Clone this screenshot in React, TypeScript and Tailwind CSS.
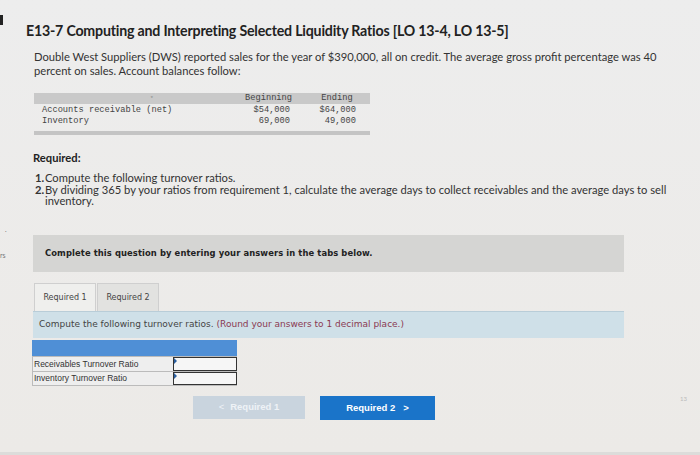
import React from 'react';

const sans = { fontFamily: 'Lato, "Open Sans", Arial, sans-serif' };
const mono = { fontFamily: '"Liberation Mono", "DejaVu Sans Mono", monospace' };
const verdana = { fontFamily: '"DejaVu Sans", Verdana, sans-serif' };

export default function App() {
  return (
    <div className="relative w-[700px] h-[455px] overflow-hidden bg-gradient-to-b from-[#ededed] to-[#eceae7] text-[#333]" style={sans}>
      {/* edge marks from the photo */}
      <div className="absolute left-0 top-[15px] w-[3px] h-[10px] bg-[#222]" />
      <span className="absolute left-[5px] top-[226px] text-[6px] text-[#777]">·</span>
      <span className="absolute left-[0px] top-[250px] text-[7px] text-[#777]">rs</span>
      <span className="absolute left-[680px] top-[394px] text-[6px] text-[#bbb]">13</span>

      <div className="pl-[26px] pt-[21px]">
        <h1 className="text-[14.2px] font-bold text-[#222] leading-[20px] tracking-[-0.2px]">
          E13-7 Computing and Interpreting Selected Liquidity Ratios [LO 13-4, LO 13-5]
        </h1>

        <div className="pl-[8px] pr-[24px]">
          <p className="mt-[9px] text-[11.2px] leading-[14px] text-[#333]">
            Double West Suppliers (DWS) reported sales for the year of $390,000, all on credit. The average gross profit percentage was 40 percent on sales. Account balances follow:
          </p>

          <div className="mt-[15px] w-[336px] text-[8.7px] text-[#444]" style={mono}>
            <div className="relative flex bg-[#c9c9c9] h-[11px] items-center leading-[11px]">
              <span className="absolute left-[116px] top-[0px] text-[6px] text-[#888]">*</span>
              <span className="flex-1" />
              <span className="w-[70px] text-right pr-[12px]">Beginning</span>
              <span className="w-[66px] text-center">Ending</span>
            </div>
            <div className="flex leading-[11px] mt-[1px]">
              <span className="flex-1 pl-[8px]">Accounts receivable (net)</span>
              <span className="w-[70px] text-right pr-[14px]">$54,000</span>
              <span className="w-[66px] text-right pr-[14px]">$64,000</span>
            </div>
            <div className="flex leading-[11px]">
              <span className="flex-1 pl-[8px]">Inventory</span>
              <span className="w-[70px] text-right pr-[14px]">69,000</span>
              <span className="w-[66px] text-right pr-[14px]">49,000</span>
            </div>
            <div className="mt-[4px] h-[4px] bg-[#c4c4c4]" />
          </div>

          <p className="mt-[16px] text-[11.2px] font-bold text-[#222] leading-[14px] -ml-[1px]">Required:</p>
          <ol className="mt-[7px] text-[11.2px] leading-[11.7px] text-[#333]">
            <li className="flex"><span className="font-bold w-[11px] shrink-0 pl-[1px]">1.</span><span>Compute the following turnover ratios.</span></li>
            <li className="flex"><span className="font-bold w-[11px] shrink-0 pl-[1px]">2.</span><span>By dividing 365 by your ratios from requirement 1, calculate the average days to collect receivables and the average days to sell inventory.</span></li>
          </ol>
        </div>

        <div className="ml-[7px] mt-[28px] w-[591px] h-[37px] bg-[#d5d5d3] flex items-center pl-[12px]">
          <span className="text-[8.4px] font-bold text-[#222] tracking-[0.1px]" style={verdana}>
            Complete this question by entering your answers in the tabs below.
          </span>
        </div>

        <div className="ml-[8px] mt-[11px] flex text-[8px] text-[#444]" style={verdana}>
          <div className="w-[62px] h-[28px] border border-[#cfcfcf] border-b-0 bg-[#efefed] flex items-center justify-center">Required 1</div>
          <div className="ml-[1px] w-[62px] h-[28px] border border-[#cfcfcf] border-b-0 bg-[#e2e2e0] flex items-center justify-center">Required 2</div>
        </div>

        <div className="ml-[7px] w-[591px] h-[27px] bg-[#cfe0e8] border-t border-[#b9cdd8] flex items-center pl-[6px] text-[9px]" style={verdana}>
          <span className="text-[#444]">Compute the following turnover ratios.</span>
          <span className="ml-[3px] text-[#8a3a52]">(Round your answers to 1 decimal place.)</span>
        </div>

        <div className="ml-[6px] mt-[2px] w-[205px] text-[8.5px] text-[#333]" style={{ fontFamily: '"Liberation Sans", Arial, sans-serif' }}>
          <div className="h-[16px] bg-[#4f8fd6]" />
          <div className="flex h-[15px] border-l border-[#999] border-t border-[#bbb]">
            <div className="w-[140px] bg-[#eeeeee] flex items-center pl-[1px]">Receivables Turnover Ratio</div>
            <div className="relative flex-1 bg-[#f6f6f6] border border-[#333]">
              <span className="absolute left-0 top-0 w-0 h-0 border-y-[3px] border-y-transparent border-l-[3px] border-l-[#2a5fa0]" />
            </div>
          </div>
          <div className="flex h-[15px] border-l border-[#999] border-t border-b border-[#bbb]">
            <div className="w-[140px] bg-[#eeeeee] flex items-center pl-[1px]">Inventory Turnover Ratio</div>
            <div className="relative flex-1 bg-[#f6f6f6] border border-[#333]">
              <span className="absolute left-0 top-0 w-0 h-0 border-y-[3px] border-y-transparent border-l-[3px] border-l-[#2a5fa0]" />
            </div>
          </div>
        </div>

        <div className="mt-[10px] ml-[167px] flex gap-[15px] text-[9.5px] font-bold" style={{ fontFamily: '"Liberation Sans", Arial, sans-serif' }}>
          <div className="w-[112px] h-[23px] bg-[#c9d4de] text-[#eef2f6] flex items-center justify-center gap-[6px]">
            <span className="font-normal">&lt;</span>
            <span>Required 1</span>
          </div>
          <div className="w-[115px] h-[24px] bg-[#1a74c9] text-white flex items-center justify-center gap-[8px]">
            <span>Required 2</span>
            <span>&gt;</span>
          </div>
        </div>
      </div>

      <div className="absolute left-0 bottom-0 w-full h-[3px] bg-[#dcdcda]" />
    </div>
  );
}
